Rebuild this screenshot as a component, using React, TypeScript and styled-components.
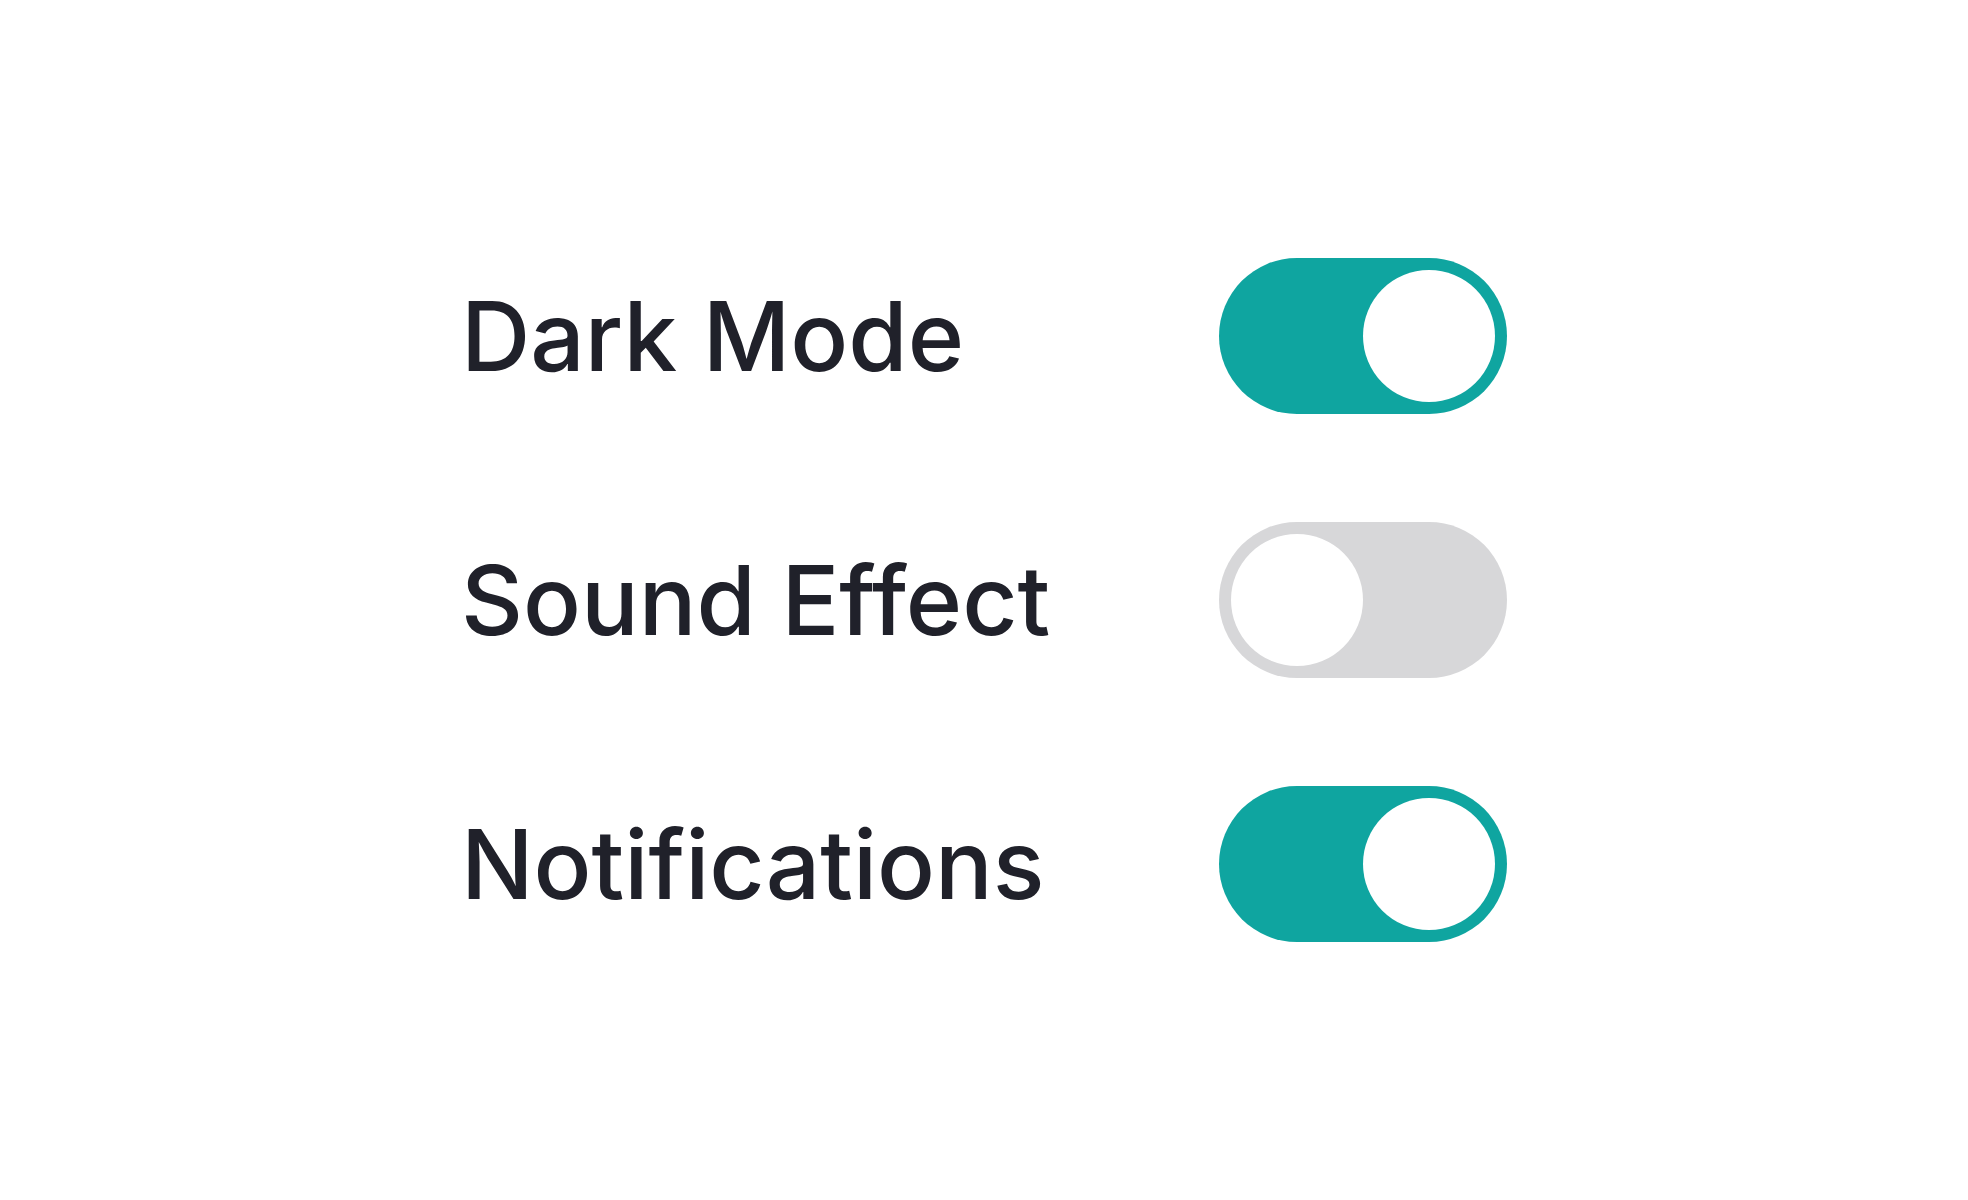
import React, { useState } from "react";
import styled, { createGlobalStyle } from "styled-components";

const GlobalStyle = createGlobalStyle`
	html, body {
		margin: 0;
		padding: 0;
		background: #ffffff;
	}
	body {
		font-family: Inter, "Noto Sans", sans-serif;
	}
`;

interface ISetting {
	key: string;
	label: string;
	on: boolean;
}

const initial: ISetting[] = [
	{ key: "dark", label: "Dark Mode", on: true },
	{ key: "sound", label: "Sound Effect", on: false },
	{ key: "notify", label: "Notifications", on: true },
];

const App: React.FC = () => {
	const [settings, setSettings] = useState(initial);

	const flip = (key: string) =>
		setSettings((prev) => prev.map((s) => (s.key === key ? { ...s, on: !s.on } : s)));

	return (
		<>
			<GlobalStyle />
			<Page>
				<List>
					{settings.map((s) => (
						<Row key={s.key}>
							<Label>{s.label}</Label>
							<Switch role="switch" aria-checked={s.on} $on={s.on} onClick={() => flip(s.key)}>
								<Knob />
							</Switch>
						</Row>
					))}
				</List>
			</Page>
		</>
	);
};

const Page = styled.div`
	width: 100%;
	height: 100vh;
	display: flex;
	align-items: center;
	justify-content: center;
`;

const List = styled.div`
	width: 1046px;
	display: flex;
	flex-direction: column;
	gap: 108px;
`;

const Row = styled.div`
	display: flex;
	align-items: center;
	justify-content: space-between;
`;

const Label = styled.div`
	font-size: 96px;
	font-weight: 500;
	color: #20212a;
	line-height: 1;
`;

const Switch = styled.button<{ $on: boolean }>`
	width: 288px;
	height: 156px;
	padding: 12px;
	border: none;
	border-radius: 78px;
	background: ${({ $on }) => ($on ? "#0fa5a0" : "#d7d7d9")};
	display: flex;
	justify-content: ${({ $on }) => ($on ? "flex-end" : "flex-start")};
	align-items: center;
	cursor: pointer;
	box-sizing: border-box;
`;

const Knob = styled.span`
	width: 132px;
	height: 132px;
	border-radius: 50%;
	background: #ffffff;
`;

export default App;
